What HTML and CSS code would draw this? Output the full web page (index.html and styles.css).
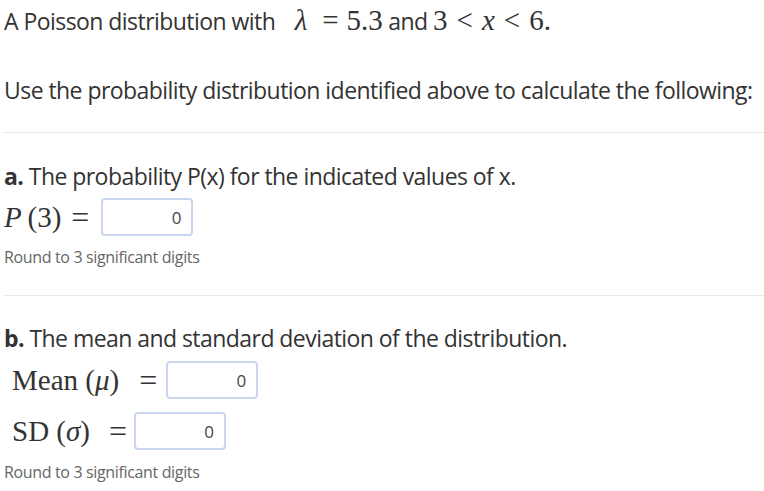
FILE: index.html
```html
<!DOCTYPE html>
<html>
<head>
<meta charset="utf-8">
<link rel="stylesheet" href="styles.css">
</head>
<body>
<div class="page">
  <p class="intro">A Poisson distribution with <span class="m lam"><i>λ</i></span><span class="m op eq1">=</span><span class="m">5.3</span> and <span class="m">3</span><span class="m op">&lt;</span><span class="m"><i>x</i></span><span class="m op">&lt;</span><span class="m">6.</span></p>
  <p class="lead">Use the probability distribution identified above to calculate the following:</p>
  <hr class="rule rule-1">
  <section class="part part-a">
    <p class="q"><b>a.</b> The probability P(x) for the indicated values of x.</p>
    <div class="row row-p">
      <span class="m lhs"><i>P</i>&thinsp;(3)</span>
      <span class="m eq">=</span>
      <span class="box">0</span>
    </div>
    <p class="hint">Round to 3 significant digits</p>
  </section>
  <hr class="rule rule-2">
  <section class="part part-b">
    <p class="q"><b>b.</b> The mean and standard deviation of the distribution.</p>
    <div class="row row-mean">
      <span class="m lhs">Mean (<i>μ</i>)</span>
      <span class="m eq">=</span>
      <span class="box">0</span>
    </div>
    <div class="row row-sd">
      <span class="m lhs">SD (<i>σ</i>)</span>
      <span class="m eq">=</span>
      <span class="box">0</span>
    </div>
    <p class="hint">Round to 3 significant digits</p>
  </section>
</div>
</body>
</html>
```

FILE: styles.css
```css
html, body {
  margin: 0;
  padding: 0;
  background: #fff;
  overflow: hidden;
}
.page {
  padding-left: 4px;
  font-family: "Open Sans", sans-serif;
  font-size: 23px;
  letter-spacing: -0.55px;
  color: #333;
}
p { margin: 0; }
.intro {
  line-height: 40px;
  white-space: nowrap;
}
.m {
  font-family: "Liberation Serif", "DejaVu Serif", serif;
  font-size: 29px;
  letter-spacing: 0;
}
.m i { font-style: italic; }
.lam { margin-left: 14px; }
.op { margin: 0 9px; }
.eq1 { margin-left: 15px; margin-right: 8px; }
.lead {
  margin-top: 29px;
  line-height: 40px;
  white-space: nowrap;
}
.rule {
  border: 0;
  border-top: 1px solid #e9e9e9;
  margin: 0 0 0 -1px;
}
.rule-1 { margin-top: 22px; }
.q {
  line-height: 40px;
  margin-top: 23px;
  white-space: nowrap;
}
.q b { font-weight: 700; }
.row {
  display: flex;
  align-items: center;
  height: 38px;
}
.eq { font-size: 32px; }
.row-p { margin-top: 2px; }
.row-p .eq { margin-left: 10px; margin-right: 12px; }
.row-mean { margin-top: 3px; }
.row-mean .lhs, .row-sd .lhs { margin-left: 8px; }
.row-mean .eq { margin-left: 20px; margin-right: 9px; }
.row-sd { margin-top: 13px; }
.row-sd .eq { margin-left: 19px; margin-right: 7px; }
.box {
  display: flex;
  align-items: center;
  justify-content: flex-end;
  box-sizing: border-box;
  width: 92px;
  height: 38px;
  padding-right: 10px;
  border: 2px solid #c9d6ee;
  border-radius: 4px;
  font-size: 17px;
  letter-spacing: 0;
  color: #444;
}
.hint {
  font-size: 16px;
  letter-spacing: -0.35px;
  color: #666;
  margin-top: 10px;
  line-height: 22px;
}
.rule-2 { margin-top: 27px; }
.part-b .q { margin-top: 22px; }
.part-b .hint { margin-top: 11px; }
```
